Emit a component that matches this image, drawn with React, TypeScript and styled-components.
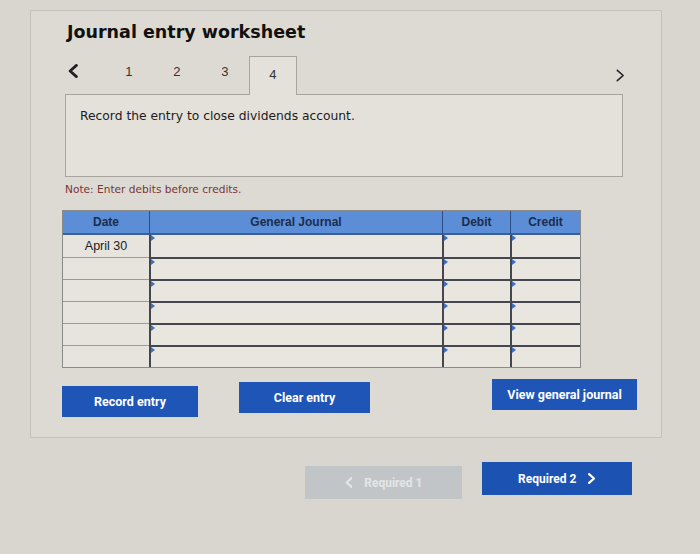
import styled, { createGlobalStyle } from 'styled-components';

const GlobalStyle = createGlobalStyle`
  html, body {
    margin: 0;
    padding: 0;
    background: #d9d6cf;
    height: 100%;
  }
`;

const Page = styled.div`
  width: 700px;
  height: 554px;
  padding: 10px 0 0 30px;
  box-sizing: border-box;
  background: #d9d6cf;
  overflow: hidden;
`;

const Panel = styled.div`
  width: 632px;
  box-sizing: border-box;
  padding: 10px 38px 20px 34px;
  background: #dddad3;
  border: 1px solid #c4c1ba;
`;

const Title = styled.h1`
  margin: 0 0 0 2px;
  font-family: 'DejaVu Sans', Verdana, sans-serif;
  font-size: 17.5px;
  line-height: 22px;
  font-weight: bold;
  color: #111;
`;

const TabsRow = styled.div`
  display: flex;
  align-items: flex-end;
  height: 38px;
  margin-top: 13px;
  position: relative;
  z-index: 1;
`;

const Arrow = styled.span<{ $right?: boolean }>`
  display: flex;
  align-items: center;
  height: 38px;
  padding-bottom: ${p => (p.$right ? '0' : '8px')};
  margin-left: ${p => (p.$right ? 'auto' : '3px')};
  margin-right: ${p => (p.$right ? '-2px' : '0')};
  box-sizing: border-box;
  color: #222;
`;

const Tab = styled.div<{ $active?: boolean }>`
  width: 48px;
  height: ${p => (p.$active ? '39px' : '38px')};
  margin-bottom: ${p => (p.$active ? '-1px' : '0')};
  box-sizing: border-box;
  display: flex;
  justify-content: center;
  align-items: center;
  padding-bottom: ${p => (p.$active ? '3px' : '8px')};
  font-family: 'Liberation Sans', Arial, sans-serif;
  font-size: 13px;
  color: #333;
  background: ${p => (p.$active ? '#e4e1da' : 'transparent')};
  border: ${p => (p.$active ? '1px solid #a8a59f' : 'none')};
  border-bottom: none;
`;

const TabGap = styled.div`
  width: 27px;
`;

const Instruction = styled.div`
  width: 558px;
  height: 83px;
  box-sizing: border-box;
  padding: 14px 14px;
  background: #e4e1da;
  border: 1px solid #a8a59f;
  font-family: 'DejaVu Sans', Verdana, sans-serif;
  font-size: 12.3px;
  color: #1c1c1c;
`;

const Note = styled.p`
  margin: 5px 0 0 0;
  font-family: 'DejaVu Sans', Verdana, sans-serif;
  font-size: 10.6px;
  line-height: 14px;
  color: #7a3535;
`;

const Table = styled.div`
  margin: 14px 0 0 -3px;
  width: 517px;
  display: grid;
  grid-template-columns: 86px 293px 68px 70px;
  border: 1px solid #8a8a8a;
  background: #e7e4dd;
`;

const HeadCell = styled.div`
  height: 22px;
  display: flex;
  justify-content: center;
  align-items: center;
  background: #5b8ed6;
  border-left: 1px solid #2d4f86;
  border-bottom: 2px solid #3a5f99;
  font-family: 'Liberation Sans', Arial, sans-serif;
  font-size: 12px;
  font-weight: bold;
  color: #1b2d4d;
  &:first-child {
    border-left: none;
  }
`;

const DateCell = styled.div`
  height: 22px;
  display: flex;
  align-items: center;
  justify-content: center;
  box-sizing: border-box;
  border-top: 1px solid #9c9a96;
  font-family: 'Liberation Sans', Arial, sans-serif;
  font-size: 12.5px;
  color: #222;
  &:nth-child(5) {
    border-top: none;
  }
`;

const InputCell = styled.div`
  position: relative;
  height: 22px;
  box-sizing: border-box;
  border-left: 2px solid #45464f;
  border-top: 2px solid #45464f;
  background: #e9e6df;
  &::before {
    content: '';
    position: absolute;
    left: 0;
    top: 0;
    border-top: 3px solid transparent;
    border-bottom: 3px solid transparent;
    border-left: 4px solid #3d6fc4;
  }
`;

const FirstInputCell = styled(InputCell)`
  border-top: none;
`;

const ButtonRow = styled.div`
  display: flex;
  align-items: center;
  margin: 18px 0 0 -3px;
`;

const ActionButton = styled.button<{ $w: number; $ml: number; $shift: number }>`
  flex-shrink: 0;
  width: ${p => p.$w}px;
  height: 31px;
  margin-left: ${p => p.$ml}px;
  transform: translateY(${p => p.$shift}px);
  border: none;
  background: #1f55b6;
  color: #fff;
  font-family: Roboto, 'Liberation Sans', sans-serif;
  font-size: 12.5px;
  font-weight: bold;
  cursor: pointer;
`;

const NavRow = styled.div`
  display: flex;
  gap: 20px;
  margin: 24px 0 0 275px;
  align-items: flex-start;
`;

const NavButton = styled.button<{ $disabled?: boolean }>`
  width: ${p => (p.$disabled ? '157px' : '150px')};
  height: 33px;
  margin-top: ${p => (p.$disabled ? '4px' : '0')};
  display: flex;
  align-items: center;
  justify-content: center;
  gap: 12px;
  border: none;
  background: ${p => (p.$disabled ? '#c2c5c7' : '#1c53b3')};
  color: ${p => (p.$disabled ? '#e3e5e6' : '#fff')};
  font-family: Roboto, 'Liberation Sans', sans-serif;
  font-size: 12px;
  font-weight: bold;
`;

const Chevron = ({ dir, size = 10, stroke = 2 }: { dir: 'left' | 'right'; size?: number; stroke?: number }) => (
  <svg width={size * 0.7} height={size} viewBox="0 0 7 10" fill="none">
    <path
      d={dir === 'left' ? 'M6 1 L1.5 5 L6 9' : 'M1 1 L5.5 5 L1 9'}
      stroke="currentColor"
      strokeWidth={stroke}
      strokeLinecap="round"
      strokeLinejoin="round"
    />
  </svg>
);

const rows = ['April 30', '', '', '', '', ''];

export default function App() {
  return (
    <>
      <GlobalStyle />
      <Page>
        <Panel>
          <Title>Journal entry worksheet</Title>

          <TabsRow>
            <Arrow><Chevron dir="left" size={14} stroke={2} /></Arrow>
            <TabGap />
            <Tab>1</Tab>
            <Tab>2</Tab>
            <Tab>3</Tab>
            <Tab $active>4</Tab>
            <Arrow $right><Chevron dir="right" size={13} stroke={1.2} /></Arrow>
          </TabsRow>

          <Instruction>Record the entry to close dividends account.</Instruction>

          <Note>Note: Enter debits before credits.</Note>

          <Table>
            <HeadCell>Date</HeadCell>
            <HeadCell>General Journal</HeadCell>
            <HeadCell>Debit</HeadCell>
            <HeadCell>Credit</HeadCell>
            {rows.map((d, i) => {
              const Cell = i === 0 ? FirstInputCell : InputCell;
              return [
                <DateCell key={`d${i}`}>{d}</DateCell>,
                <Cell key={`g${i}`} />,
                <Cell key={`db${i}`} />,
                <Cell key={`c${i}`} />,
              ];
            })}
          </Table>

          <ButtonRow>
            <ActionButton $w={136} $ml={0} $shift={0}>Record entry</ActionButton>
            <ActionButton $w={131} $ml={41} $shift={-4}>Clear entry</ActionButton>
            <ActionButton $w={145} $ml={122} $shift={-7}>View general journal</ActionButton>
          </ButtonRow>
        </Panel>

        <NavRow>
          <NavButton $disabled><Chevron dir="left" size={11} />Required 1</NavButton>
          <NavButton>Required 2<Chevron dir="right" size={11} /></NavButton>
        </NavRow>
      </Page>
    </>
  );
}
